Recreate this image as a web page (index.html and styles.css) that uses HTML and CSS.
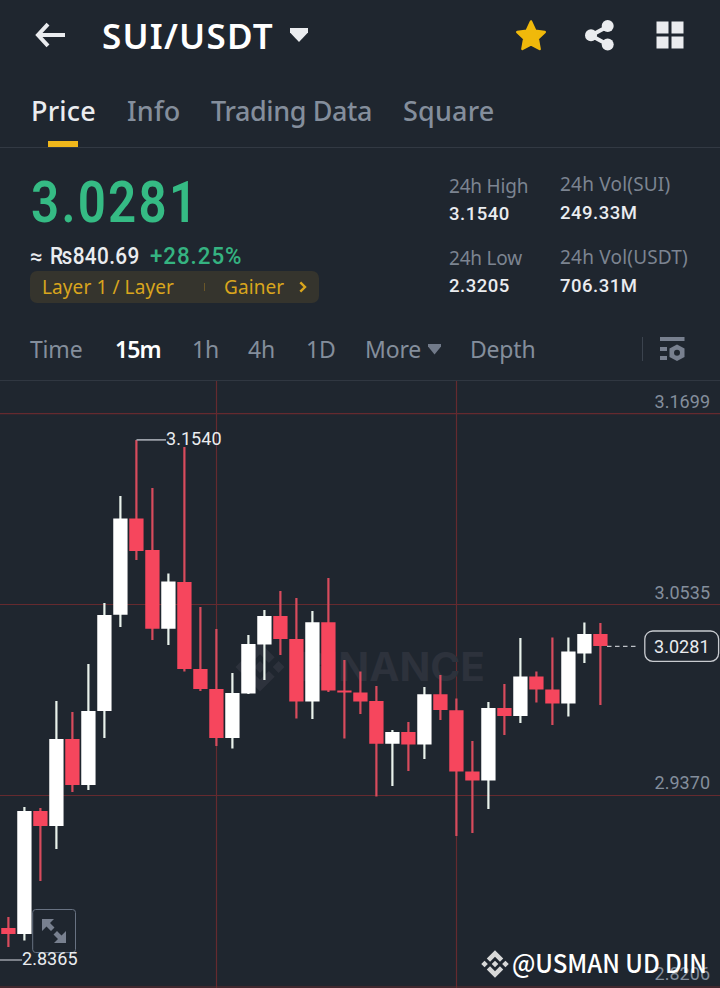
FILE: index.html
```html
<!DOCTYPE html>
<html lang="en">
<head>
<meta charset="utf-8">
<title>SUI/USDT</title>
<link rel="stylesheet" href="styles.css">
</head>
<body>
<header class="topbar">
  <svg class="back" width="30" height="26" viewBox="0 0 30 26"><path d="M30 13H3M13 2.200L3 13L13 23.800" fill="none" stroke="#eaecef" stroke-width="4"/></svg>
  <h1 class="pair">SUI/USDT</h1>
  <svg class="caret" width="18" height="14" viewBox="0 0 18 14"><path d="M0 0H18V4.500L9 14L0 4.500Z" fill="#eaecef"/></svg>
  <svg class="star" width="30" height="31" viewBox="0 0 30 31"><path d="M15 1.500L19.300 10.800L28.700 12L21.800 18.600L23.600 29L15 24.500L6.400 29L8.200 18.600L1.300 12L10.700 10.800Z" fill="#f0b90b" stroke="#f0b90b" stroke-width="2.500" stroke-linejoin="round"/></svg>
  <svg class="share" width="29" height="31" viewBox="0 0 29 31"><path d="M22.500 6.500L6 15.500L22.500 24.500" fill="none" stroke="#eaecef" stroke-width="4"/><g fill="#eaecef"><circle cx="22.700" cy="6" r="6"/><circle cx="6" cy="15.300" r="6"/><circle cx="22.700" cy="24.500" r="6"/></g></svg>
  <svg class="apps" width="28" height="28" viewBox="0 0 28 28"><path d="M.5.5h12v12H.5zM15.500.5h12v12h-12zM.5 15.500h12v12H.5zM15.500 15.500h12v12h-12z" fill="#eaecef"/></svg>
</header>
<nav class="tabs">
  <span class="tab active">Price</span><span class="tab info">Info</span><span class="tab trading">Trading Data</span><span class="tab">Square</span>
</nav>
<section class="summary">
  <div class="quote">
    <div class="price"><span>3.0281</span></div>
    <div class="fiat"><span class="approx">≈</span><span class="rupee"><b>₨840.69</b></span><span class="change"><b>+28.25%</b></span></div>
    <div class="tags"><span class="layer">Layer 1 / Layer</span><i class="bar"></i><span class="gainer">Gainer</span><svg width="8" height="12" viewBox="0 0 8 12"><path d="M1.300 1.300L6 6L1.300 10.700" fill="none" stroke="#d9a51d" stroke-width="2.400"/></svg></div>
  </div>
  <dl class="stats left">
    <dt class="high">24h High</dt><dd>3.1540</dd>
    <dt class="low">24h Low</dt><dd>2.3205</dd>
  </dl>
  <dl class="stats">
    <dt class="vol">24h Vol(SUI)</dt><dd>249.33M</dd>
    <dt class="vol">24h Vol(USDT)</dt><dd>706.31M</dd>
  </dl>
</section>
<nav class="frames">
  <span>Time</span><span class="on">15m</span><span>1h</span><span>4h</span><span>1D</span><span>More</span>
  <svg width="13" height="11" viewBox="0 0 13 11"><path d="M0 0H13V2.500L6.500 10.500L0 2.500Z" fill="#717a8a"/></svg>
  <span>Depth</span><i class="rule"></i>
  <svg class="settings" width="25" height="24" viewBox="0 0 25 24"><path d="M0 0H24.500V4H0ZM0 10H7V14H0ZM0 19H7V23H0Z" fill="#78808f"/><path d="M17 7.500L24.500 11.500V20L17 24L9.500 20V11.500Z" fill="#78808f"/><circle cx="17" cy="15.800" r="3" fill="#1f262f"/></svg>
</nav>
<main class="chart">
<svg width="720" height="607" viewBox="0 381 720 607">
  <path d="M0 413.700H720M0 604.500H720M0 795.500H720M0 987H720M216.500 380V988M456.500 380V988" stroke="#652a2f" stroke-width="1.200"/>
  <g fill="#2d323c">
    <path id="mark" transform="translate(260 667) scale(.98)" d="M0-25L15-10L9-4L0-13L-9-4L-15-10ZM0 25L15 10L9 4L0 13L-9 4L-15 10ZM-19-6L-13 0L-19 6L-25 0ZM19-6L25 0L19 6L13 0ZM0-6L6 0L0 6L-6 0Z"/>
    <text class="brand" x="300" y="681" textLength="185" lengthAdjust="spacingAndGlyphs">BINANCE</text>
  </g>
  <g transform="translate(.4 0)" fill="none">
    <path stroke="#e9f2ec" stroke-width="2.200" d="M24 807V940.500M56 701V849M88 664V790M104 603V738M120 496V627M168 573.500V645M232 673V748.500M248 635V694M264 610V680M312 611V719M392 730V786M424 687V759M488 702V809M520 638V723M568 637.500V716.500M584 622.500V663"/>
    <path stroke="#fff" stroke-width="14.300" d="M24 811V934M56 739V826M88 711V785M104 615V711M120 518.500V614.700M168 581.500V628.700M232 693V738M248 644V693.500M264 616V644.500M312 622.300V701.500M392 732V743.700M424 694.300V744.500M488 708V780.500M520 676.500V716M568 651.500V703.500M584 634V653.500"/>
    <path stroke="#d84b5d" stroke-width="2.200" d="M8 917V947M40 808V881M72 712V792M136 440V560M152 488V640M184 447V671.500M200 607V691M216 629V746M280 591V655M296 598V718.500M328 578V692M344 660V738.500M360 671.500V714M376 686V796.500M408 722V771M440 675V720M456 698.500V836M472 741V833M504 684V735M536 671.500V702.500M552 637.500V725M600 623V705"/>
    <path stroke="#f6465d" stroke-width="14.300" d="M8 928V934M40 811V826M72 739V785M136 518.500V551M152 550V628.700M184 582V669M200 669V689M216 689V738M280 616V639M296 639V701.500M328 622.300V690.500M344 690.500V692.500M360 692.500V701.500M376 701V743.700M408 732V744.500M440 694.300V710M456 710.300V771.500M472 771.500V780.500M504 708V716M536 676.500V689.500M552 689.500V703.500M600 634V646"/>
  </g>
  <path d="M136.500 439.800H166M0 960H22" stroke="#9a9fa8" stroke-width="1.700"/>
  <path d="M607 646.300H636" stroke="#bec2c8" stroke-width="1.200" stroke-dasharray="4.500 3.500"/>
  <rect x="644.800" y="631" width="73.800" height="30.300" rx="8" fill="#1f262f" stroke="#c8cbd0" stroke-width="1.300"/>
  <rect x="32.700" y="909.500" width="42.800" height="43" rx="3" fill="#1f262f" stroke="#687282"/>
  <path d="M42 919H54L50 923L54.500 927.500L51 931L46.500 926.500L42 931ZM66 943H54L58 939L53.500 934.500L57 931L61.500 935.500L66 931Z" fill="#78808f"/>
  <g class="label">
    <text x="654.500" y="408" textLength="55.500">3.1699</text>
    <text x="654.500" y="599" textLength="55.500">3.0535</text>
    <text x="654.500" y="789" textLength="55.500">2.9370</text>
    <text x="654.500" y="980" textLength="55.500">2.8206</text>
  </g>
  <g class="label bright">
    <text x="166" y="445" textLength="55.500">3.1540</text>
    <text x="22" y="965" textLength="55.500">2.8365</text>
    <text x="654" y="653" textLength="55.500">3.0281</text>
  </g>
  <path fill="#d8d8d8" transform="translate(495 964) scale(.55)" d="M0-25L15-10L9-4L0-13L-9-4L-15-10ZM0 25L15 10L9 4L0 13L-9 4L-15 10ZM-19-6L-13 0L-19 6L-25 0ZM19-6L25 0L19 6L13 0ZM0-6L6 0L0 6L-6 0Z"/>
  <text class="author" x="512" y="973" textLength="195" lengthAdjust="spacingAndGlyphs">@USMAN UD DIN</text>
</svg>
</main>
</body>
</html>
```
FILE: styles.css
```css
* { box-sizing: border-box; }
body { margin: 0; width: 720px; height: 988px; overflow: hidden; background: #1f262f; color: #eaecef; font-family: "Noto Sans", sans-serif; }
svg { display: block; flex: none; }
span { white-space: nowrap; }
.topbar { height: 80px; padding: 0 35px; display: flex; align-items: flex-start; }
.back { margin-top: 22px; }
.pair { width: 172px; margin: 12px 0 0 37px; font-size: 35px; line-height: 48px; font-weight: 600; letter-spacing: 1.2px; color: #fff; white-space: nowrap; }
.caret { margin: 28px 0 0 16px; }
.star { margin: 20px 0 0 208px; }
.share { margin: 20px 0 0 39px; }
.apps { margin: 21px 0 0 42px; }
.tabs { height: 68px; border-bottom: 1px solid #323943; padding-left: 31px; display: flex; font-size: 27px; font-weight: 500; line-height: 62px; color: #848e9c; }
.tab { width: 91px; letter-spacing: .2px; }
.active { width: 96px; color: #eaecef; }
.active::after { content: ""; display: block; width: 30px; height: 6px; margin: -1px 0 0 17px; background: #f0b71b; }
.info { width: 84px; }
.trading { width: 192px; letter-spacing: -.4px; }
.summary { height: 170px; padding-left: 30px; display: flex; }
.quote { width: 419px; }
.price { height: 87px; padding-top: 23px; font: 600 57px/64px Roboto, sans-serif; color: #35bb84; }
.price span { display: inline-block; margin-left: 1px; letter-spacing: 2.6px; transform: scaleX(.865); transform-origin: left; }
.fiat { height: 36px; display: flex; font: 500 23.5px/43px Roboto, sans-serif; }
.fiat b { display: inline-block; font-weight: 500; letter-spacing: .4px; transform: scaleX(.885); transform-origin: left; }
.approx { width: 20px; font-size: 22px; }
.rupee { width: 100px; }
.change { color: #35b381; }
.change b { letter-spacing: 1px; transform: scaleX(.95); }
.tags { width: 289px; height: 32px; padding: 0 12px; border-radius: 7px; background: #35342d; color: #d9a51d; display: flex; align-items: center; font-size: 19px; letter-spacing: .1px; }
.layer { width: 162px; }
.bar { width: 1px; height: 8px; background: #6a5628; }
.gainer { width: 75px; margin-left: 19px; }
.stats { width: 150px; margin: 22px 0 0; font-size: 19px; line-height: 29px; }
.stats.left { width: 111px; margin-top: 24px; }
.stats dt { height: 29px; color: #7c8491; white-space: nowrap; letter-spacing: -.2px; }
.stats .vol { letter-spacing: .2px; }
.stats dd { height: 44px; margin: 0; font: 500 18.500px/29px Roboto, sans-serif; letter-spacing: .5px; }
.stats.left dd { height: 43px; line-height: 27px; }
.frames { height: 63px; border-bottom: 1px solid #303741; padding-left: 30px; display: grid; grid-template-columns: 85px 77px 56px 58px 59px 63px 42px 172px 18px 26px; align-items: center; font-size: 23px; color: #848e9c; }
.frames span { padding-top: 1px; height: 62px; line-height: 61px; letter-spacing: -.2px; }
.frames .on { color: #fff; font-weight: 600; letter-spacing: -.9px; }
.rule { width: 1px; height: 24px; background: #3b434e; }
.chart { height: 607px; }
.label { font: 18px Roboto, sans-serif; fill: #848e9c; }
.bright { fill: #eaecef; }
.brand { font: 700 39px Inter, sans-serif; }
.author { font: 500 25px "Noto Sans CJK SC", sans-serif; fill: #fff; }
```
